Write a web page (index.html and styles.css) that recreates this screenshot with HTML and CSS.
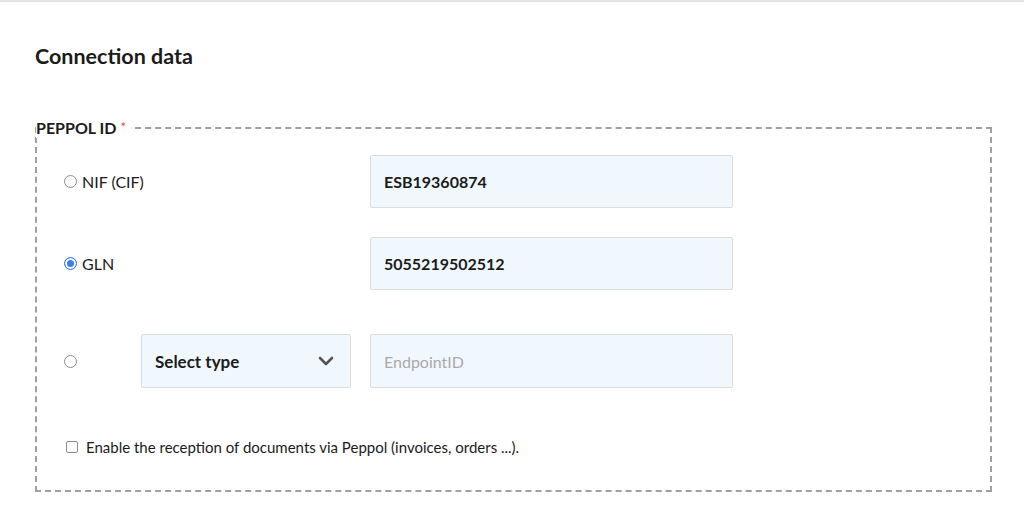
FILE: index.html
```html
<!DOCTYPE html>
<html>
<head>
<meta charset="utf-8">
<link rel="stylesheet" href="styles.css">
</head>
<body>
<div class="topline"></div>
<main class="page">
  <h2 class="title">Connection data</h2>
  <fieldset class="box">
    <legend class="legend">PEPPOL ID <span class="req">*</span></legend>
    <div class="grid">
      <label class="choice span2"><span class="radio"></span>NIF (CIF)</label>
      <div class="field"><span class="value">ESB19360874</span></div>

      <label class="choice span2"><span class="radio on"></span>GLN</label>
      <div class="field"><span class="value">5055219502512</span></div>

      <label class="choice low"><span class="radio"></span></label>
      <div class="field select low"><span class="value">Select type</span>
        <svg class="chev" width="16" height="10" viewBox="0 0 16 10"><path d="M2 2 L8 8 L14 2" fill="none" stroke="#555" stroke-width="2.6" stroke-linecap="round" stroke-linejoin="round"/></svg>
      </div>
      <div class="field low"><span class="ph">EndpointID</span></div>
    </div>
    <label class="check"><span class="box-c"></span>Enable the reception of documents via Peppol (invoices, orders ...).</label>
  </fieldset>
</main>
</body>
</html>
```
FILE: styles.css
```css
html, body { margin: 0; padding: 0; background: #fff; }
body { font-family: "Lato", "Liberation Sans", sans-serif; color: #1b1b1b; width: 1024px; height: 516px; overflow: hidden; }
.topline { height: 2px; background: #e4e4e4; }
.page { padding: 0 32px 0 35px; }
.title { margin: 0; padding-top: 40px; height: 32px; font-size: 21.5px; font-weight: 700; line-height: 28px; }
.box { margin: 43px 0 0 0; padding: 0 0 34px 0; border: 2px dashed #a0a0a0; min-width: 0; }
.legend { padding: 0 5px 0 0; margin-left: -1px; font-size: 16px; font-weight: 700; line-height: 20px; }
.req { color: #e05050; font-weight: 400; font-size: 14px; vertical-align: 2px; }
.grid { display: grid; grid-template-columns: 77px 229px 363px; grid-template-rows: 53px 53px 69px; row-gap: 29px; padding: 17px 0 0 27px; align-items: center; }
.grid > .low { align-self: end; height: 54px; }
.choice { display: flex; align-items: center; font-size: 16px; white-space: nowrap; height: 100%; }
.span2 { grid-column: 1 / 3; }
.radio { width: 11px; height: 11px; border: 1px solid #8d8d8d; border-radius: 50%; margin-right: 5px; box-sizing: content-box; background: #fff; }
.radio.on { border-color: #3b7cf0; background: #3b7cf0; box-shadow: inset 0 0 0 2px #fff; }
.field { box-sizing: border-box; height: 53px; background: #f1f8fd; border: 1.5px solid #dcdcdc; border-radius: 2px; display: flex; align-items: center; padding: 0 13px; font-size: 16px; }
.select { width: 210px; justify-content: space-between; padding-right: 16px; font-size: 17px; }
.value { font-weight: 700; }
.ph { color: #a9a9a9; }
.check { display: flex; align-items: center; font-size: 15px; margin: 50px 0 0 29px; }
.box-c { width: 10px; height: 10px; border: 1px solid #8d8d8d; border-radius: 2px; margin-right: 8px; background: #fff; }
```
